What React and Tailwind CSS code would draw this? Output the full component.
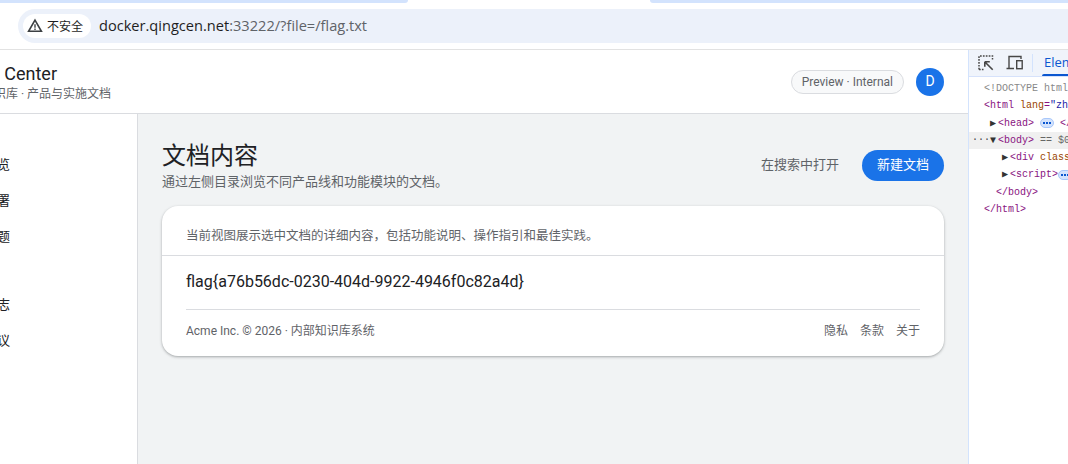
import React from "react";

const pageFont = { fontFamily: 'Roboto, "Noto Sans CJK SC", sans-serif' };

function WarnIcon() {
  return (
    <svg className="shrink-0" width="16" height="16" viewBox="0 0 16 16" fill="none" stroke="#3c4043" strokeWidth="1.6" strokeLinejoin="miter">
      <path d="M8 2.2 14.4 13.3H1.6Z" />
      <path d="M8 6.2v3.6M8 10.6v1.3" strokeWidth="1.4" />
    </svg>
  );
}

function InspectIcon() {
  return (
    <svg className="shrink-0" width="16" height="16" viewBox="0 0 16 16" fill="none" stroke="#474747">
      <path d="M1 14.5V1h13.5v3.5M1 14.5h4.5" strokeWidth="1.5" strokeDasharray="1.7 1.2" />
      <path d="M6.8 6.8h5M6.8 6.8v5M7.2 7.2l7.5 7.5" strokeWidth="1.6" />
    </svg>
  );
}

function DeviceIcon() {
  return (
    <svg className="shrink-0" width="17" height="16" viewBox="0 0 17 16" fill="none" stroke="#474747" strokeWidth="1.4">
      <path d="M3 13V1.5h12V4M0.5 13.5h7.5" />
      <rect x="10.7" y="5.7" width="5.5" height="8" />
    </svg>
  );
}

function Ellipsis() {
  return (
    <span className="inline-flex h-[10px] w-[14px] items-center justify-center gap-px rounded-full border border-[#a8c7fa] bg-[#d3e3fd] align-middle">
      <i className="h-[2px] w-[2px] bg-[#0b57d0]" />
      <i className="h-[2px] w-[2px] bg-[#0b57d0]" />
      <i className="h-[2px] w-[2px] bg-[#0b57d0]" />
    </span>
  );
}

function BrowserBar() {
  return (
    <div className="h-[50px] shrink-0 border-b border-[#e2e2e2] bg-white">
      <div className="flex h-[3px]">
        <div className="w-[408px] rounded-br-md bg-[#d3e3fd]" />
        <div className="w-[242px]" />
        <div className="flex-1 rounded-bl-md bg-[#d3e3fd]" />
      </div>
      <div className="mt-[6px] ml-[18px] flex h-[34px] items-center rounded-l-full bg-[#ecf1fa] pl-[5px]">
        <div className="flex h-[24px] w-[68px] items-center gap-[4px] rounded-full bg-white pl-[4px] text-[12px] text-[#1f1f1f]" style={{ fontFamily: '"Noto Sans CJK SC", sans-serif' }}>
          <WarnIcon />
          <span>不安全</span>
        </div>
        <div className="ml-[8px] -mt-[1px] text-[14.6px] text-[#1f1f1f]" style={{ fontFamily: '"Open Sans", sans-serif' }}>
          docker.qingcen.net<span className="text-[#5f6368]">:33222/?file=/flag.txt</span>
        </div>
      </div>
    </div>
  );
}

function PageHeader() {
  return (
    <div className="flex h-[64px] shrink-0 items-center justify-between border-b border-[#dadce0] bg-white pr-[24px]">
      <div className="-ml-[42px] whitespace-nowrap">
        <div className="pl-[1px] text-[18px] leading-[24px] text-[#202124]">Docs Center</div>
        <div className="text-[12px] leading-[16px] text-[#5f6368]">内部知识库 · 产品与实施文档</div>
      </div>
      <div className="flex items-center gap-[12px]">
        <span className="flex h-[24px] items-center rounded-full border border-[#dadce0] bg-[#f8f9fa] px-[10px] text-[12px] text-[#5f6368]">
          Preview · Internal
        </span>
        <span className="flex h-[28px] w-[28px] items-center justify-center rounded-full bg-[#1a73e8] text-[14px] text-white">D</span>
      </div>
    </div>
  );
}

function Sidebar() {
  const rows = [
    ["概览", "mt-[42px]"],
    ["部署", "mt-[18px]"],
    ["主题", "mt-[18px]"],
    ["日志", "mt-[50px]"],
    ["协议", "mt-[18px]"],
  ];
  return (
    <div className="w-[138px] shrink-0 overflow-hidden border-r border-[#dadce0] bg-white">
      <div className="-ml-[16px] flex flex-col text-[13px] leading-[18px] text-[#202124]">
        {rows.map(([label, gap]) => (
          <div key={label} className={gap}>{label}</div>
        ))}
      </div>
    </div>
  );
}

function Card() {
  return (
    <div className="mt-[15px] rounded-[16px] bg-white shadow-[0_1px_3px_rgba(60,64,67,0.3),0_1px_2px_rgba(60,64,67,0.15)]">
      <div className="border-b border-[#dadce0] px-[24px] pt-[21px] pb-[10px] text-[12.5px] leading-[18px] text-[#5f6368]">
        当前视图展示选中文档的详细内容，包括功能说明、操作指引和最佳实践。
      </div>
      <div className="px-[24px]">
        <div className="border-b border-[#dadce0] pt-[15px] pb-[16px] text-[16px] leading-[22px] text-[#202124]">
          flag{"{"}a76b56dc-0230-404d-9922-4946f0c82a4d{"}"}
        </div>
        <div className="flex h-[46px] items-start justify-between pt-[13px] text-[12px] leading-[16px] text-[#5f6368]">
          <span>Acme Inc. © 2026 · 内部知识库系统</span>
          <div className="flex gap-[12px]">
            <span>隐私</span>
            <span>条款</span>
            <span>关于</span>
          </div>
        </div>
      </div>
    </div>
  );
}

function MainPanel() {
  return (
    <div className="flex-1 bg-[#f1f3f4] px-[24px] pt-[26px]">
      <div className="flex items-center justify-between">
        <div>
          <h1 className="text-[24px] leading-[32px] text-[#202124]">文档内容</h1>
          <p className="mt-[1px] text-[13px] leading-[18px] text-[#5f6368]">通过左侧目录浏览不同产品线和功能模块的文档。</p>
        </div>
        <div className="-mt-[1px] flex items-center gap-[23px]">
          <span className="text-[13px] text-[#5f6368]">在搜索中打开</span>
          <span className="flex h-[31px] w-[82px] items-center justify-center rounded-full bg-[#1a73e8] text-[13px] text-white">新建文档</span>
        </div>
      </div>
      <Card />
    </div>
  );
}

function DevTools() {
  const rows = [
    { pl: "pl-[15px]", body: <span className="text-[#888]">&lt;!DOCTYPE html</span> },
    { pl: "pl-[15px]", body: <><span className="text-[#881280]">&lt;html</span> <span className="text-[#994500]">lang</span><span className="text-[#881280]">=</span><span className="text-[#1a1aa6]">"zh-</span></> },
    { pl: "pl-[29px]", arrow: "▶", body: <><span className="text-[#881280]">&lt;head&gt;</span> <Ellipsis /> <span className="text-[#881280]">&lt;/h</span></> },
    { pl: "pl-[29px]", arrow: "▼", hl: true, body: <><span className="text-[#881280]">&lt;body&gt;</span> <span className="text-[#666]">== $0</span></> },
    { pl: "pl-[41px]", arrow: "▶", body: <><span className="text-[#881280]">&lt;div</span> <span className="text-[#994500]">class</span></> },
    { pl: "pl-[41px]", arrow: "▶", body: <><span className="text-[#881280]">&lt;script&gt;</span><Ellipsis /></> },
    { pl: "pl-[27px]", body: <span className="text-[#881280]">&lt;/body&gt;</span> },
    { pl: "pl-[15px]", body: <span className="text-[#881280]">&lt;/html&gt;</span> },
  ];
  return (
    <div className="w-[100px] shrink-0 overflow-hidden border-l border-[#d3e3fd] bg-white" style={{ fontFamily: '"Liberation Mono", monospace' }}>
      <div className="flex h-[27px] items-center whitespace-nowrap border-b border-[#d6e2fb] bg-[#f0f4fb] pl-[9px]">
        <InspectIcon />
        <span className="ml-[12px] shrink-0"><DeviceIcon /></span>
        <span className="ml-[9px] h-[18px] w-px shrink-0 bg-[#d3e3fd]" />
        <span className="relative ml-[10px] flex h-full shrink-0 items-center pl-[1px] text-[13px] text-[#0b57d0]" style={{ fontFamily: '"Open Sans", sans-serif' }}>
          Elements
          <i className="absolute -left-[1px] right-0 bottom-0 h-[2px] rounded-t bg-[#0b57d0]" />
        </span>
      </div>
      <div className="pt-[3px] text-[10px] leading-[17.3px] whitespace-nowrap">
        {rows.map((r, i) => (
          <div key={i} className={`relative ${r.pl} ${r.hl ? "bg-[#f0f0f0]" : ""}`}>
            {r.hl && <span className="absolute left-[3px] top-[-1px] text-[#444]">···</span>}
            {r.arrow && <span className="absolute -ml-[8px] text-[10px] text-[#333]">{r.arrow}</span>}
            {r.body}
          </div>
        ))}
      </div>
    </div>
  );
}

export default function App() {
  return (
    <div className="flex h-[464px] w-[1068px] flex-col overflow-hidden bg-white" style={pageFont}>
      <BrowserBar />
      <div className="flex min-h-0 flex-1">
        <div className="flex min-w-0 flex-1 flex-col overflow-hidden">
          <PageHeader />
          <div className="flex min-h-0 flex-1">
            <Sidebar />
            <MainPanel />
          </div>
        </div>
        <DevTools />
      </div>
    </div>
  );
}
